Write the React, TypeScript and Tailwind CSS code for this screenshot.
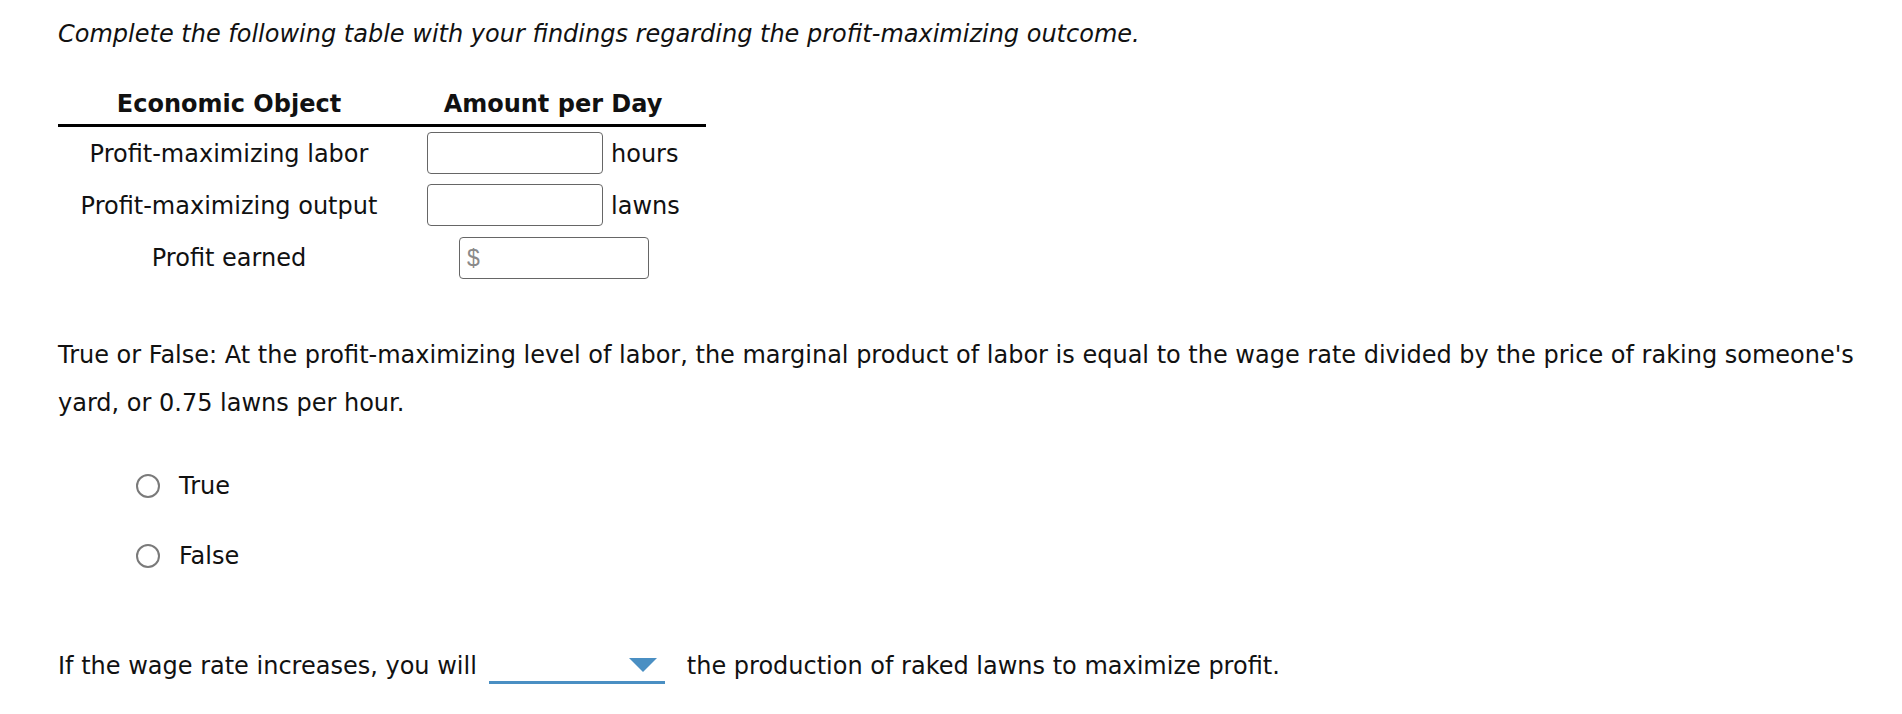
import React from "react";

const rows = [
  { label: "Profit-maximizing labor", unit: "hours" },
  { label: "Profit-maximizing output", unit: "lawns" },
];

function Radio({ label }: { label: string }) {
  return (
    <label className="flex h-[40px] items-center">
      <span className="h-[24px] w-[24px] rounded-full border-2 border-[#7a7a7a] bg-white" />
      <span className="ml-[19px]">{label}</span>
    </label>
  );
}

export default function App() {
  return (
    <main
      className="min-h-screen bg-white pl-[58px] pt-[16px] text-[24px] text-[#111]"
      style={{ fontFamily: '"DejaVu Sans", Verdana, sans-serif' }}
    >
      <p className="h-[36px] italic leading-[36px]">
        Complete the following table with your findings regarding the profit-maximizing outcome.
      </p>

      {/* findings table */}
      <div className="mt-[32px] w-[648px]">
        <div className="grid h-[43px] grid-cols-[342px_306px] items-center border-b-[3px] border-black font-bold">
          <div className="text-center">Economic Object</div>
          <div className="text-center">Amount per Day</div>
        </div>

        {rows.map((row) => (
          <div key={row.label} className="grid h-[52px] grid-cols-[342px_306px] items-center">
            <div className="pt-[2px] text-center">{row.label}</div>
            <div className="flex items-center pl-[27px]">
              <div className="h-[42px] w-[176px] rounded-[4px] border border-[#666]" />
              <span className="ml-[8px] pt-[2px]">{row.unit}</span>
            </div>
          </div>
        ))}

        <div className="grid h-[54px] grid-cols-[342px_306px] items-center">
          <div className="text-center">Profit earned</div>
          <div className="flex justify-center pl-[2px]">
            <div className="flex h-[42px] w-[190px] items-center rounded-[4px] border border-[#666] pl-[7px]">
              <span
                className="text-[23px] text-[#8a8a8a]"
                style={{ fontFamily: '"Liberation Sans", Arial, sans-serif' }}
              >
                $
              </span>
            </div>
          </div>
        </div>
      </div>

      <p className="mt-[46px] w-[1830px] leading-[48px]">
        True or False: At the profit-maximizing level of labor, the marginal product of labor is equal to the
        wage rate divided by the price of raking someone's yard, or 0.75 lawns per hour.
      </p>

      <div className="mt-[39px] flex flex-col gap-[30px] pl-[78px]">
        <Radio label="True" />
        <Radio label="False" />
      </div>

      <div className="mt-[72px] flex h-[36px] items-center">
        <span>If the wage rate increases, you will</span>
        <span className="relative ml-[12px] h-[36px] w-[176px] border-b-[3px] border-[#4a8fc3]">
          <svg
            className="absolute right-[8px] top-[10px]"
            width="28"
            height="14"
            viewBox="0 0 28 14"
          >
            <polygon points="0,0 28,0 14,14" fill="#4a8fc3" />
          </svg>
        </span>
        <span className="ml-[22px]">the production of raked lawns to maximize profit.</span>
      </div>
    </main>
  );
}
